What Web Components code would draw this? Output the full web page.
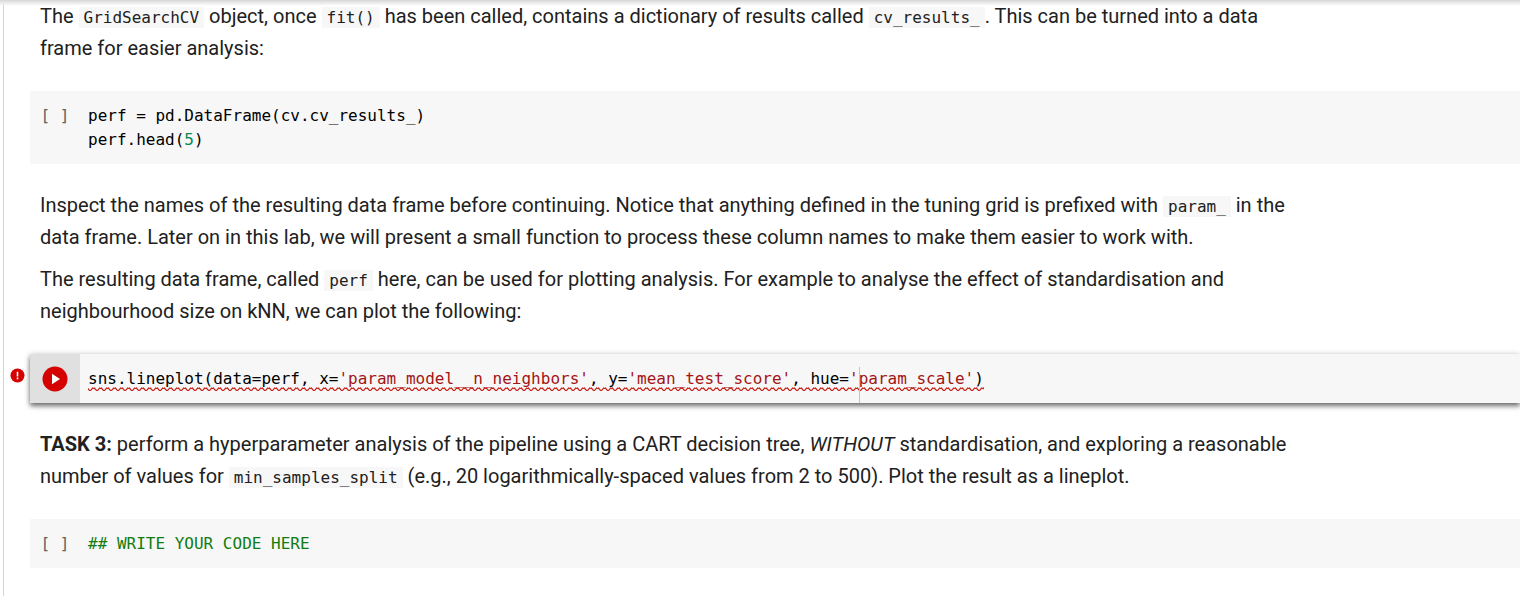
<!DOCTYPE html>
<html lang="en">
<head>
<meta charset="utf-8">
<title>Notebook</title>
<style>
  body { margin: 0; background: #fff; color: #212121; font: 20px/32px Roboto, sans-serif; }
</style>
</head>
<body>
<nb-page>
  <nb-text>
    <p>The <nb-code>GridSearchCV</nb-code> object, once <nb-code>fit()</nb-code> has been called, contains a dictionary of results called <nb-code>cv_results_</nb-code>. This can be turned into a data frame for easier analysis:</p>
  </nb-text>
  <nb-cell>perf = pd.DataFrame(cv.cv_results_)
perf.head(<nb-token kind="number">5</nb-token>)</nb-cell>
  <nb-text>
    <p>Inspect the names of the resulting data frame before continuing. Notice that anything defined in the tuning grid is prefixed with <nb-code>param_</nb-code> in the data frame. Later on in this lab, we will present a small function to process these column names to make them easier to work with.</p>
    <p>The resulting data frame, called <nb-code>perf</nb-code> here, can be used for plotting analysis. For example to analyse the effect of standardisation and neighbourhood size on kNN, we can plot the following:</p>
  </nb-text>
  <nb-cell active><nb-token kind="error">sns.lineplot(data=perf, x=<nb-token kind="string">'param_model__n_neighbors'</nb-token>, y=<nb-token kind="string">'mean_test_score'</nb-token>, hue=<nb-token kind="string">'<nb-caret></nb-caret>param_scale'</nb-token>)</nb-token></nb-cell>
  <nb-text>
    <p><strong>TASK 3:</strong> perform a hyperparameter analysis of the pipeline using a CART decision tree, <em>WITHOUT</em> standardisation, and exploring a reasonable number of values for <nb-code>min_samples_split</nb-code> (e.g., 20 logarithmically-spaced values from 2 to 500). Plot the result as a lineplot.</p>
  </nb-text>
  <nb-cell><nb-token kind="comment">## WRITE YOUR CODE HERE</nb-token></nb-cell>
</nb-page>

<script>
// Tokens live inside <pre>, so whitespace between the style and the slot must not be kept.
const define = (name, css, html) => customElements.define(name, class extends HTMLElement {
  constructor() {
    super();
    this.attachShadow({ mode: 'open' }).innerHTML = `<style>${css}</style>${html.trim()}`;
  }
});

define('nb-page', `
  :host { display: block; position: relative; overflow: hidden; }
  main { box-sizing: border-box; min-height: 100vh; margin-left: 3px; padding-left: 26px; border-left: 1px solid #d4d4d4; display: flow-root; }
  .shade { position: absolute; inset: 0 0 auto 0; height: 6px; background: linear-gradient(#d6d6d6, #ececec 50%, rgba(255,255,255,0)); }
`, `<div class="shade"></div><main><slot></slot></main>`);

define('nb-text', `
  :host { display: grid; gap: 10px; max-width: 1260px; padding-left: 10px; }
  ::slotted(p) { margin: 0; }
`, `<slot></slot>`);

define('nb-code', `
  code { padding: 1px 5px; background: #f7f7f7; font: 16px/24px "DejaVu Sans Mono", monospace; }
`, `<code><slot></slot></code>`);

define('nb-token', `
  :host([kind="number"]) { color: #09885a; }
  :host([kind="string"]) { color: #a31515; }
  :host([kind="comment"]) { color: #107c10; }
  :host([kind="error"]) {
    padding-bottom: 3px;
    background: url("data:image/svg+xml,%3Csvg xmlns='http://www.w3.org/2000/svg' width='7' height='4' viewBox='0 0 6 3' preserveAspectRatio='none'%3E%3Cg fill='%23c8281e'%3E%3Cpath d='M5.5 0 2.5 3H1.1l3-3zM4 0l2 2V.6L5.4 0zM0 2l1 1h1.4L0 .6z'/%3E%3C/g%3E%3C/svg%3E") repeat-x left bottom;
  }
`, `<slot></slot>`);

define('nb-caret', `
  :host { position: relative; }
  span { position: absolute; left: 0; top: -2px; width: 1px; height: 36px; background: #c4c4c4; }
`, `<span></span>`);

define('nb-cell', `
  :host { display: flex; position: relative; margin: 27px 0 25px; background: #f7f7f7; }
  .gutter { flex: none; width: 50px; padding: 13px 0 12px; text-align: center; }
  pre { flex: 1; margin: 0; padding: 13px 8px 12px; color: #000; }
  pre, code, .idle { font: 16px/24px "DejaVu Sans Mono", monospace; }
  .idle { color: #616161; white-space: pre; }
  .run { height: 24px; }
  button { display: block; margin: 0 auto; padding: 0; border: 0; background: none; width: 26px; height: 26px; }
  svg { display: block; }
  .run, .alert { display: none; }
  .alert { position: absolute; left: -20px; top: 14px; }
  :host([active]) { box-shadow: 0 3px 5px rgba(0,0,0,.55), 0 0 6px rgba(0,0,0,.12); clip-path: inset(-14px 0 -14px -24px); }
  :host([active]) .gutter { padding: 12px 0; background: #e0e0e0; }
  :host([active]) .idle { display: none; }
  :host([active]) .run, :host([active]) .alert { display: block; }
`, `
<svg class="alert" width="15" height="15" viewBox="0 0 15 15" role="img" aria-label="Error">
  <circle cx="7.5" cy="7.5" r="7" fill="#d50000"/>
  <path d="M6.7 3.8h1.6v4.6H6.7zM6.7 9.6h1.6v1.6H6.7z" fill="#fff"/>
</svg>
<div class="gutter">
  <div class="idle">[ ]</div>
  <div class="run"><button type="button" aria-label="Run cell">
    <svg width="26" height="26" viewBox="0 0 26 26"><circle cx="13" cy="13" r="12.5" fill="#d50000"/><path d="M10 7.8v10.4l8-5.2z" fill="#fff"/></svg>
  </button></div>
</div>
<pre><code><slot></slot></code></pre>`);
</script>
</body>
</html>
